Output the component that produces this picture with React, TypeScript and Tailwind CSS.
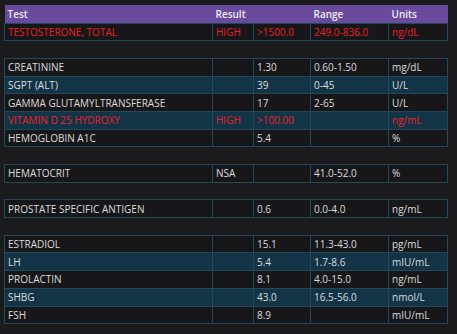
type Row = {
  test: string;
  flag?: string;
  result?: string;
  range?: string;
  units?: string;
};

const GROUPS: Row[][] = [
  [{ test: 'TESTOSTERONE, TOTAL', flag: 'HIGH', result: '>1500.0', range: '249.0-836.0', units: 'ng/dL' }],
  [
    { test: 'CREATININE', result: '1.30', range: '0.60-1.50', units: 'mg/dL' },
    { test: 'SGPT (ALT)', result: '39', range: '0-45', units: 'U/L' },
    { test: 'GAMMA GLUTAMYLTRANSFERASE', result: '17', range: '2-65', units: 'U/L' },
    { test: 'VITAMIN D 25 HYDROXY', flag: 'HIGH', result: '>100.00', units: 'ng/mL' },
    { test: 'HEMOGLOBIN A1C', result: '5.4', units: '%' },
  ],
  [{ test: 'HEMATOCRIT', flag: 'NSA', range: '41.0-52.0', units: '%' }],
  [{ test: 'PROSTATE SPECIFIC ANTIGEN', result: '0.6', range: '0.0-4.0', units: 'ng/mL' }],
  [
    { test: 'ESTRADIOL', result: '15.1', range: '11.3-43.0', units: 'pg/mL' },
    { test: 'LH', result: '5.4', range: '1.7-8.6', units: 'mIU/mL' },
    { test: 'PROLACTIN', result: '8.1', range: '4.0-15.0', units: 'ng/mL' },
    { test: 'SHBG', result: '43.0', range: '16.5-56.0', units: 'nmol/L' },
    { test: 'FSH', result: '8.9', units: 'mIU/mL' },
  ],
];

const cell = 'border border-[#22495b] px-[3px] h-[17.7px] p-0 align-middle whitespace-nowrap';

export default function App() {
  return (
    <div
      className="w-[457px] h-[334px] bg-[#1b1b1d] pt-[5px] pl-[4px] text-[#dcdcdc] text-[10px] leading-none"
      style={{ fontFamily: '"Open Sans", sans-serif' }}
    >
      <table className="w-[443px] table-fixed border-collapse">
        <colgroup>
          <col className="w-[208px]" />
          <col className="w-[41px]" />
          <col className="w-[57px]" />
          <col className="w-[78px]" />
          <col className="w-[59px]" />
        </colgroup>
        <thead>
          <tr className="bg-[#6a4a9d] text-[#ececf2] text-[10px] text-left">
            <th className="h-[18px] px-[3px] font-semibold">Test</th>
            <th className="px-[3px] font-semibold" colSpan={2}>Result</th>
            <th className="px-[3px] font-semibold">Range</th>
            <th className="px-[3px] font-semibold">Units</th>
          </tr>
        </thead>
        <tbody>
          {GROUPS.map((group, gi) => [
            gi > 0 && (
              <tr key={`gap-${gi}`}>
                <td colSpan={5} className="h-[17.7px] p-0" />
              </tr>
            ),
            ...group.map((row, ri) => {
              const high = row.flag === 'HIGH';
              const striped = ri % 2 === 1;
              return (
                <tr
                  key={`${gi}-${ri}`}
                  className={`${striped ? 'bg-[#133447]' : 'bg-[#171719]'} ${high ? 'text-[#ec1f28]' : ''}`}
                >
                  <td className={cell}>{row.test}</td>
                  <td className={cell}>{row.flag}</td>
                  <td className={cell}>{row.result}</td>
                  <td className={cell}>{row.range}</td>
                  <td className={cell}>{row.units}</td>
                </tr>
              );
            }),
          ])}
        </tbody>
      </table>
    </div>
  );
}
